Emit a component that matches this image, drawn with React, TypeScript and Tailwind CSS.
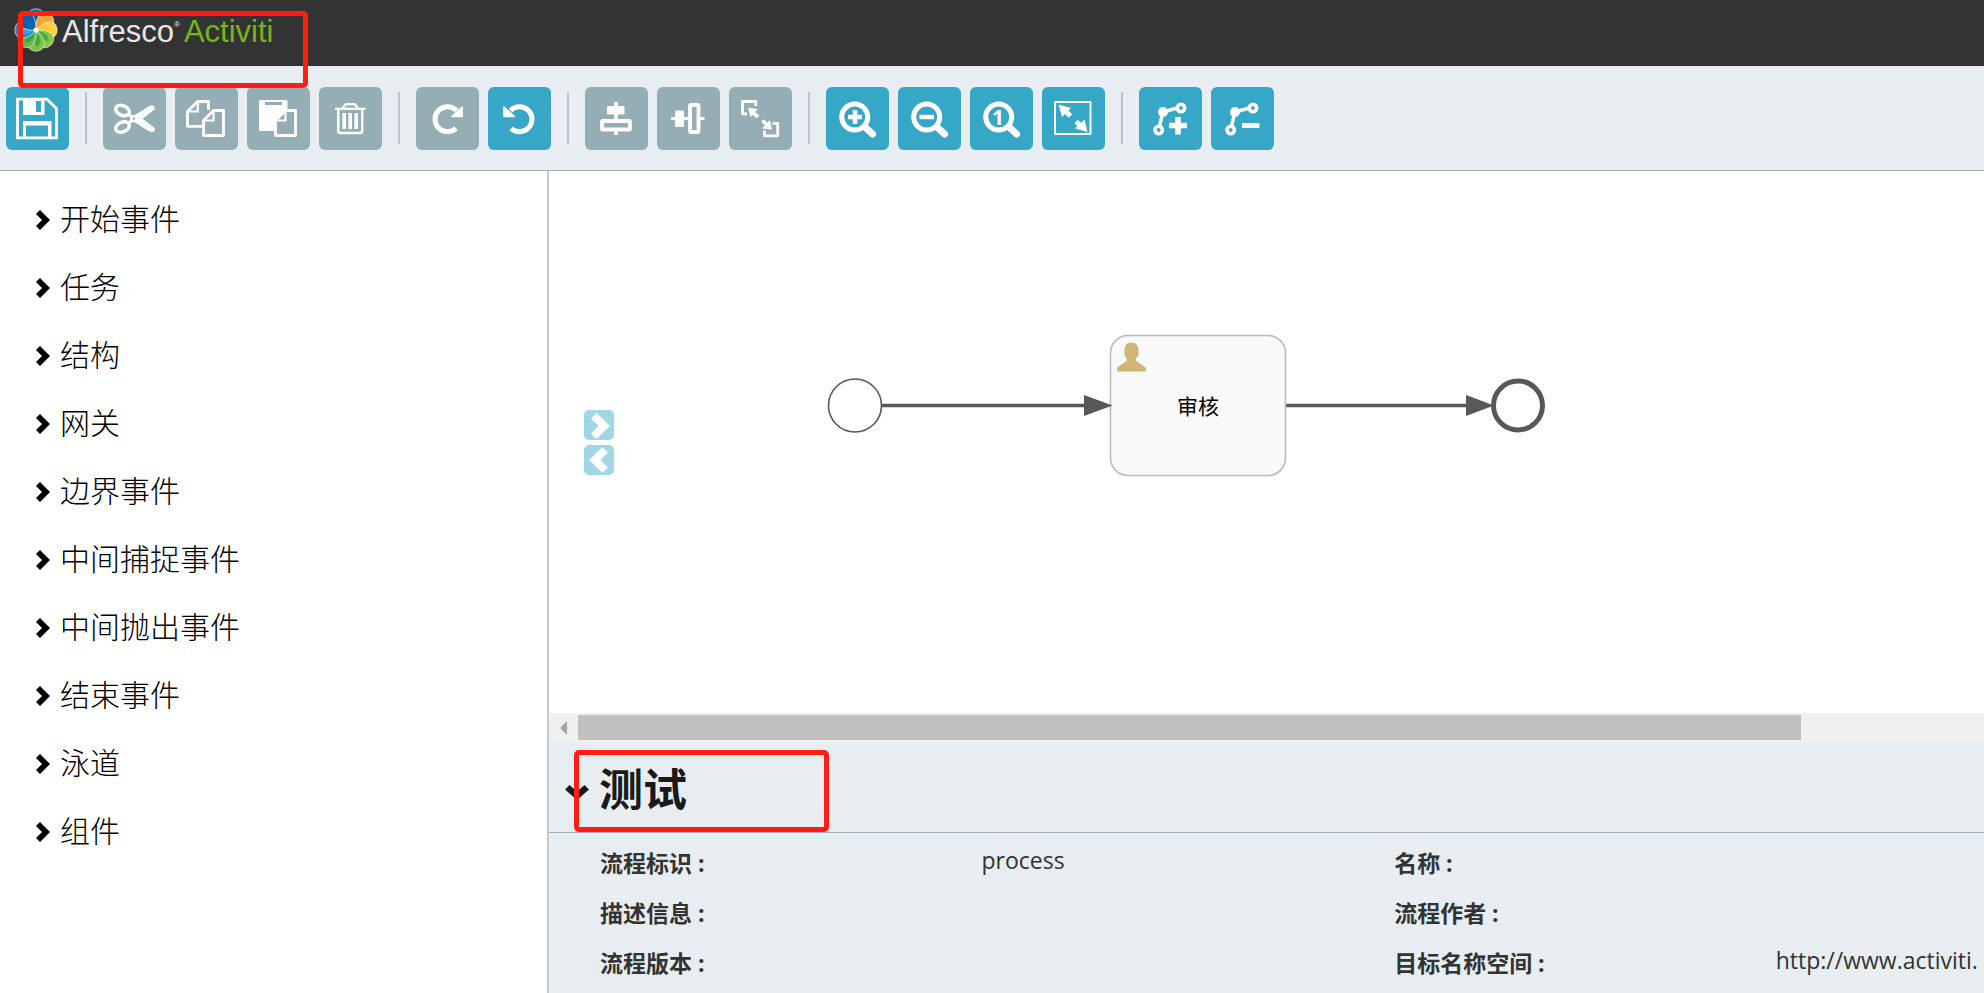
import { useState, type ReactNode } from 'react'

const paletteGroups = [
  '开始事件',
  '任务',
  '结构',
  '网关',
  '边界事件',
  '中间捕捉事件',
  '中间抛出事件',
  '结束事件',
  '泳道',
  '组件',
]

const properties = [
  { label: '流程标识 :', value: 'process' },
  { label: '名称 :', value: '' },
  { label: '描述信息 :', value: '' },
  { label: '流程作者 :', value: '' },
  { label: '流程版本 :', value: '' },
  { label: '目标名称空间 :', value: 'http://www.activiti.' },
]

type Tool = {
  name: string
  icon: ReactNode
  disabled?: boolean
}

const GREY = '#95aeb5'
const BLUE = '#36a7c7'

const lens = (
  <>
    <circle cx="28.7" cy="30" r="13" strokeWidth="5" />
    <path d="M39 40 L46.5 47" strokeWidth="7" strokeLinecap="round" />
  </>
)

const frontPage = (
  <>
    <path d="M28.5 33.5 L38.5 23.5 H48.5 V48.5 H28.5 Z" fill={GREY} strokeWidth="2.8" strokeLinejoin="round" />
    <path d="M38.5 24 V33.5 H29" strokeWidth="2.2" />
  </>
)

const bendPoints = (
  <>
    <path d="M20 41 L24 25 L40 20.5" strokeWidth="3.6" />
    <circle cx="24" cy="25" r="5" fill="#fff" stroke="none" />
    <circle cx="19.7" cy="43" r="3.7" fill={BLUE} strokeWidth="3.6" />
    <circle cx="42" cy="21" r="3.7" fill={BLUE} strokeWidth="3.6" />
  </>
)

const toolGroups: Tool[][] = [
  [
    {
      name: 'Save',
      icon: (
        <>
          <path d="M11.5 12.2 H41 L50.5 21.5 V50.8 H11.5 Z" strokeWidth="2.8" />
          <path d="M17 11 H38.5 V28 H17 Z" fill="#fff" stroke="none" />
          <path d="M30 14 H35 V25 H30 Z" fill={BLUE} stroke="none" />
          <path d="M17 34 H45.5 V52 H17 Z" fill="#fff" stroke="none" />
          <path d="M20 38.5 H42 V49.5 H20 Z" fill={BLUE} stroke="none" />
        </>
      ),
    },
  ],
  [
    {
      name: 'Cut',
      disabled: true,
      icon: (
        <>
          <ellipse cx="19.5" cy="23.5" rx="7.2" ry="4.8" transform="rotate(24 19.5 23.5)" strokeWidth="3.4" />
          <ellipse cx="19.5" cy="40" rx="7.2" ry="4.8" transform="rotate(-24 19.5 40)" strokeWidth="3.4" />
          <path d="M25 27 L31 29 L46.5 19.5 Q51.5 17.5 51.5 22 L39 31.7 L51.5 41.5 Q51.5 46 46.5 44 L31 34.5 L25 36.5 L28 31.7 Z" fill="#fff" strokeWidth="1" />
          <circle cx="31" cy="31.7" r="1.2" fill={GREY} stroke="none" />
        </>
      ),
    },
    {
      name: 'Copy',
      disabled: true,
      icon: (
        <>
          <path d="M28 39.3 H12.5 V24.5 L22.5 14.5 H33.5 V23" strokeWidth="2.8" strokeLinejoin="round" />
          <path d="M22.8 15 V24.5 H13" strokeWidth="2.2" />
          {frontPage}
        </>
      ),
    },
    {
      name: 'Paste',
      disabled: true,
      icon: (
        <>
          <rect x="12" y="13" width="28.5" height="31" rx="1.5" fill="#fff" stroke="none" />
          <path d="M18 15 H35 V18 H18 Z" fill={GREY} stroke="none" />
          {frontPage}
        </>
      ),
    },
    {
      name: 'Delete',
      disabled: true,
      icon: (
        <>
          <path d="M16 21.8 H46.5" strokeWidth="2.2" />
          <path d="M23.5 21 L27 17.2 H35.5 L39 21" strokeWidth="2.2" />
          <path d="M19.3 22 V44 Q19.3 46 21.5 46 H41 Q43.2 46 43.2 44 V22" strokeWidth="2.4" />
          <path d="M25.2 26 V42 M31.2 26 V42 M37.2 26 V42" strokeWidth="3.6" />
        </>
      ),
    },
  ],
  [
    {
      name: 'Redo',
      disabled: true,
      icon: (
        <>
          <path d="M40 41.4 A12.5 12.5 0 1 1 40.5 23.5" strokeWidth="5" />
          <path d="M36 29.5 L46.2 20 V29.5 Z" fill="#fff" strokeWidth="1.5" strokeLinejoin="round" />
        </>
      ),
    },
    {
      name: 'Undo',
      icon: (
        <>
          <path d="M23 41.4 A12.5 12.5 0 1 0 22.5 23.5" strokeWidth="5" />
          <path d="M26.5 29.5 L16 20 V29.5 Z" fill="#fff" strokeWidth="1.5" strokeLinejoin="round" />
        </>
      ),
    },
  ],
  [
    {
      name: 'Align vertical',
      disabled: true,
      icon: (
        <>
          <path d="M31 15 V48" strokeWidth="3.8" />
          <rect x="22" y="19" width="17.5" height="8.5" rx="1" fill="#fff" stroke="none" />
          <rect x="17" y="34" width="28" height="8.5" rx="1" fill={GREY} strokeWidth="3.8" />
        </>
      ),
    },
    {
      name: 'Align horizontal',
      disabled: true,
      icon: (
        <>
          <path d="M14 31.5 H47.5" strokeWidth="3" />
          <rect x="18" y="23.5" width="9" height="16.5" rx="1" fill="#fff" stroke="none" />
          <rect x="33" y="18" width="8.5" height="27" rx="1" fill={GREY} strokeWidth="3.8" />
        </>
      ),
    },
    {
      name: 'Same size',
      disabled: true,
      icon: (
        <>
          <path d="M18 26.8 H13.5 V14.5 H26.8 V19" strokeWidth="2.8" strokeLinejoin="round" />
          <path d="M43.5 36.3 H48.7 V48.8 H35.5 V43.5" strokeWidth="2.8" strokeLinejoin="round" />
          <path d="M22 24 L29 30" strokeWidth="3.8" />
          <path d="M19 20.5 L29 22 L21.5 30 Z" fill="#fff" stroke="none" />
          <path d="M33.5 33.5 L40 40" strokeWidth="3.8" />
          <path d="M43 42.5 L33 41.5 L41 33 Z" fill="#fff" stroke="none" />
        </>
      ),
    },
  ],
  [
    {
      name: 'Zoom in',
      icon: (
        <>
          {lens}
          <path d="M22 30 H36 M29 23 V37" strokeWidth="4.6" />
        </>
      ),
    },
    {
      name: 'Zoom out',
      icon: (
        <>
          {lens}
          <path d="M21.5 30 H36" strokeWidth="4.4" />
        </>
      ),
    },
    {
      name: 'Zoom to actual size',
      icon: (
        <>
          {lens}
          <text x="28" y="37.5" fill="#fff" stroke="none" textAnchor="middle" className="font-['Open_Sans',sans-serif] text-[21px] font-bold">
            1
          </text>
        </>
      ),
    },
    {
      name: 'Zoom to fit',
      icon: (
        <>
          <rect x="13" y="15" width="35.5" height="32" rx="0.5" strokeWidth="2" />
          <path d="M21 22 L28.5 29 M34 34.5 L41 41" strokeWidth="5" />
          <path d="M16.5 17.5 L29 21 L20 30 Z" fill="#fff" stroke="none" />
          <path d="M45.5 45 L33 41.5 L42.5 32.5 Z" fill="#fff" stroke="none" />
        </>
      ),
    },
  ],
  [
    {
      name: 'Add bend point',
      icon: (
        <>
          {bendPoints}
          <path d="M30 38.5 H48 M39 30 V47.5" strokeWidth="5.6" />
        </>
      ),
    },
    {
      name: 'Remove bend point',
      icon: (
        <>
          {bendPoints}
          <path d="M31 38.5 H48.5" strokeWidth="4.8" />
        </>
      ),
    },
  ],
]

function LogoMark() {
  // clockwise, starting at the top
  const petals = ['#0f6ab4', '#f9a13a', '#fdd23e', '#8cc63f', '#7fc241', '#6cb944', '#1f86c9', '#0b5ea8']
  const spots = ['#0a5aa3', '#f9a13a', '#fbc62f', '#4caf4a', '#45a847', '#3fa648', '#3b9fdb', '#0b66b2']

  return (
    <svg viewBox="-22 -22 44 44" className="size-11 shrink-0" aria-hidden="true">
      <circle r="18.5" fill="#dfeee6" />
      {petals.map((color, i) => (
        <g key={i} transform={`rotate(${i * 45})`}>
          <path d="M0 0 C-7 -6 -11 -14 -6 -19 C-3 -22 4 -22 7 -18 C10 -13 6 -6 0 0 Z" fill={color} stroke="#dfeee6" strokeWidth="0.7" />
          <path d="M0 -2 C-5 -7 -6 -12 -1 -17 C3 -12 4 -7 0 -2 Z" fill={spots[i]} />
        </g>
      ))}
      <circle r="2.6" fill="#fff" />
    </svg>
  )
}

function ToolButton({ tool }: { tool: Tool }) {
  return (
    <button
      type="button"
      aria-label={tool.name}
      disabled={tool.disabled}
      className={`size-[63px] rounded-md ${tool.disabled ? 'bg-[#95aeb5]' : 'bg-[#36a7c7] hover:bg-[#2b93b1]'}`}
    >
      <svg viewBox="0 0 63 63" className="size-full" fill="none" stroke="#fff">
        {tool.icon}
      </svg>
    </button>
  )
}

function Toolbar() {
  return (
    <div className="flex h-[105px] shrink-0 items-center border-b border-[#a4adbb] bg-[#e8edf1] pl-1.5">
      {toolGroups.map((group, i) => (
        <div key={i} className="flex items-center">
          {i > 0 && <div className="mx-4 h-[52px] w-0.5 bg-[#bcc3cd]" />}
          <div className="flex gap-[9px]">
            {group.map((tool) => (
              <ToolButton key={tool.name} tool={tool} />
            ))}
          </div>
        </div>
      ))}
    </div>
  )
}

function Palette() {
  return (
    <nav className="w-[549px] shrink-0 border-r-2 border-[#c3c8cd] bg-white pt-[13px]">
      <ul>
        {paletteGroups.map((name) => (
          <li key={name}>
            <button type="button" className="flex h-17 items-center gap-2.5 pl-9 text-[30px] font-light text-black">
              <svg viewBox="0 0 14 20" className="mt-1 h-5 w-3.5" aria-hidden="true">
                <path d="M4 0 L14 10 L4 20 L0 16 L6 10 L0 4 Z" />
              </svg>
              {name}
            </button>
          </li>
        ))}
      </ul>
    </nav>
  )
}

function Canvas() {
  return (
    <div className="relative min-h-0 flex-1 bg-white">
      <svg className="absolute inset-0 size-full" role="img" aria-label="Process diagram">
        <g fill="none" stroke="#585858">
          <circle cx="306" cy="234.5" r="26.5" strokeWidth="1.6" />
          <path d="M333 234.5 H540 M737 234.5 H924" strokeWidth="3.6" />
          <circle cx="969" cy="234.5" r="24.5" strokeWidth="5" />
        </g>
        <rect x="561.5" y="164.5" width="175" height="140" rx="17.5" fill="#f9f9f9" stroke="#bbb" strokeWidth="1.6" />
        <path d="M535 224 L563.5 234.5 L535 245 Z M917 224 L945 234.5 L917 245 Z" fill="#585858" />
        <path
          d="M568 199.5 V197.5 Q568 196.5 569 196 L577.5 190 Q578.5 189 577.5 187.5 L575.5 184.5 V178 Q576 171.5 582.3 171.5 Q588.5 171.5 589.5 178 V184.5 L587 187.5 Q586 189 587.5 190 L596 196 Q597 196.5 597 197.5 V199.5 Q597 200.5 596 200.5 H569 Q568 200.5 568 199.5 Z"
          fill="#d1b575"
        />
        <text x="649" y="243" textAnchor="middle" className="fill-black text-[21px]">
          审核
        </text>
      </svg>

      <div className="absolute top-[239px] left-[35px] flex flex-col gap-[5px]">
        <button type="button" aria-label="Next" className="size-[30px] rounded-[5px] bg-[#9fd7e4]">
          <svg viewBox="0 0 30 30" fill="#fff">
            <path d="M12.5 3 L26 16 L12.5 29 L7 23.5 L14.5 16 L7 8.5 Z" />
          </svg>
        </button>
        <button type="button" aria-label="Previous" className="size-[30px] rounded-[5px] bg-[#9fd7e4]">
          <svg viewBox="0 0 30 30" fill="#fff">
            <path d="M18.5 2 L5 15 L18.5 28 L24 22.5 L16.5 15 L24 7.5 Z" />
          </svg>
        </button>
      </div>
    </div>
  )
}

function HorizontalScrollbar() {
  return (
    <div className="flex h-[29px] shrink-0 items-center bg-[#f0f0f0]">
      <div className="flex w-[29px] justify-center">
        <svg viewBox="0 0 7 14" className="h-3.5 w-[7px]" fill="#a3a3a3" aria-hidden="true">
          <path d="M7 0 V14 L0 7 Z" />
        </svg>
      </div>
      <div className="flex-1">
        <div className="h-[25px] w-[87%] bg-[#c1c1c1]" />
      </div>
    </div>
  )
}

function PropertiesPanel() {
  const [open, setOpen] = useState(true)

  return (
    <section className="shrink-0 bg-[#e8edf1]">
      <div className="relative border-b border-[#a4adbb]">
        <h2>
          <button
            type="button"
            aria-expanded={open}
            onClick={() => setOpen(!open)}
            className="flex h-[90px] w-full items-center gap-2.5 pt-1 pl-4 text-[44px] font-bold text-[#1a1a1a]"
          >
            <svg viewBox="0 0 24 15" className="mt-1.5 h-[15px] w-6" fill="#1a1a1a" aria-hidden="true">
              <path d="M4.5 0 L12 6.5 L19.5 0 L24 4.5 L12 15 L0 4.5 Z" />
            </svg>
            测试
          </button>
        </h2>
        <div className="pointer-events-none absolute top-2 left-[25px] h-[82px] w-[255px] rounded-[5px] border-5 border-[#ff1f12]" />
      </div>
      {open && (
        <dl className="grid grid-cols-[381fr_412fr_381fr_208fr] py-[5px] pl-[51px] text-[#333]">
          {properties.map(({ label, value }) => (
            <div key={label} className="col-span-2 grid h-[50px] grid-cols-subgrid items-center">
              <dt className="text-[23px] font-bold">{label}</dt>
              <dd className="mb-1.5 text-[23px]">{value}</dd>
            </div>
          ))}
        </dl>
      )}
    </section>
  )
}

export default function App() {
  return (
    <div className="relative flex h-screen flex-col overflow-hidden bg-white font-['Open_Sans','Noto_Sans_CJK_SC',sans-serif]">
      <header className="flex h-[66px] shrink-0 bg-[#333] pt-2 pl-3.5">
        <a href="#" aria-label="Alfresco Activiti" className="flex h-12 items-center gap-1 font-['Liberation_Sans',sans-serif] text-[31px]">
          <span className="pb-1">
            <LogoMark />
          </span>
          <span className="flex text-[#e6e6e6]">
            Alfresco
            <sup className="top-0 pt-3 text-[8px] leading-none">®</sup>
          </span>
          <span className="text-[#76b41b]">Activiti</span>
        </a>
      </header>
      <Toolbar />
      <div className="flex min-h-0 flex-1">
        <Palette />
        <main className="flex min-w-0 flex-1 flex-col">
          <Canvas />
          <HorizontalScrollbar />
          <PropertiesPanel />
        </main>
      </div>
      <div className="pointer-events-none absolute top-[11px] left-[18px] h-[77px] w-[290px] rounded-[5px] border-5 border-[#ff1f12]" />
    </div>
  )
}
